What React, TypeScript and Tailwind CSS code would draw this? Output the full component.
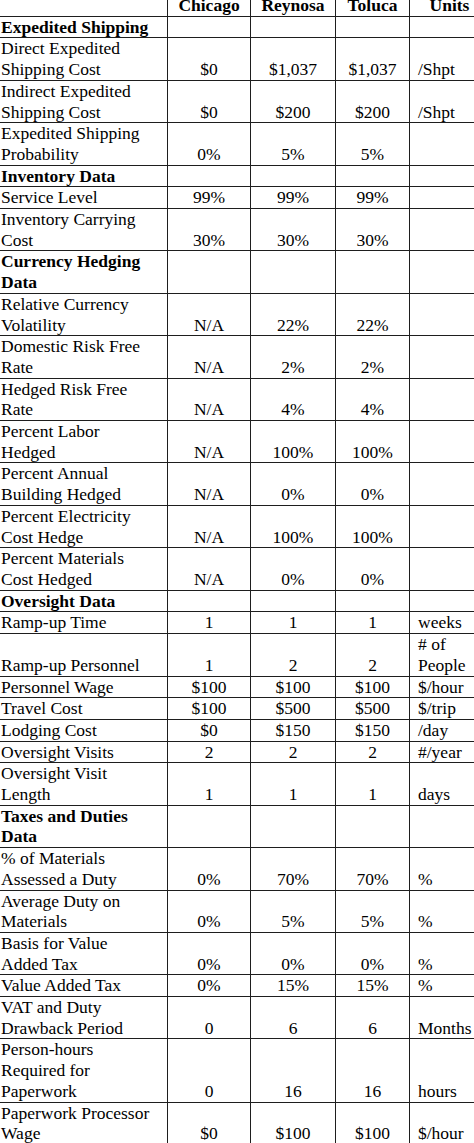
import React from "react";

type Row = {
  label: string[];
  vals?: string[];
  units?: string[];
  bold?: boolean;
};

const rows: Row[] = [
  { label: ["Expedited Shipping"], bold: true },
  { label: ["Direct Expedited", "Shipping Cost"], vals: ["$0", "$1,037", "$1,037"], units: ["/Shpt"] },
  { label: ["Indirect Expedited", "Shipping Cost"], vals: ["$0", "$200", "$200"], units: ["/Shpt"] },
  { label: ["Expedited Shipping", "Probability"], vals: ["0%", "5%", "5%"] },
  { label: ["Inventory Data"], bold: true },
  { label: ["Service Level"], vals: ["99%", "99%", "99%"] },
  { label: ["Inventory Carrying", "Cost"], vals: ["30%", "30%", "30%"] },
  { label: ["Currency Hedging", "Data"], bold: true },
  { label: ["Relative Currency", "Volatility"], vals: ["N/A", "22%", "22%"] },
  { label: ["Domestic Risk Free", "Rate"], vals: ["N/A", "2%", "2%"] },
  { label: ["Hedged Risk Free", "Rate"], vals: ["N/A", "4%", "4%"] },
  { label: ["Percent Labor", "Hedged"], vals: ["N/A", "100%", "100%"] },
  { label: ["Percent Annual", "Building Hedged"], vals: ["N/A", "0%", "0%"] },
  { label: ["Percent Electricity", "Cost Hedge"], vals: ["N/A", "100%", "100%"] },
  { label: ["Percent Materials", "Cost Hedged"], vals: ["N/A", "0%", "0%"] },
  { label: ["Oversight Data"], bold: true },
  { label: ["Ramp-up Time"], vals: ["1", "1", "1"], units: ["weeks"] },
  { label: ["Ramp-up Personnel"], vals: ["1", "2", "2"], units: ["# of", "People"] },
  { label: ["Personnel Wage"], vals: ["$100", "$100", "$100"], units: ["$/hour"] },
  { label: ["Travel Cost"], vals: ["$100", "$500", "$500"], units: ["$/trip"] },
  { label: ["Lodging Cost"], vals: ["$0", "$150", "$150"], units: ["/day"] },
  { label: ["Oversight Visits"], vals: ["2", "2", "2"], units: ["#/year"] },
  { label: ["Oversight Visit", "Length"], vals: ["1", "1", "1"], units: ["days"] },
  { label: ["Taxes and Duties", "Data"], bold: true },
  { label: ["% of Materials", "Assessed a Duty"], vals: ["0%", "70%", "70%"], units: ["%"] },
  { label: ["Average Duty on", "Materials"], vals: ["0%", "5%", "5%"], units: ["%"] },
  { label: ["Basis for Value", "Added Tax"], vals: ["0%", "0%", "0%"], units: ["%"] },
  { label: ["Value Added Tax"], vals: ["0%", "15%", "15%"], units: ["%"] },
  { label: ["VAT and Duty", "Drawback Period"], vals: ["0", "6", "6"], units: ["Months"] },
  { label: ["Person-hours", "Required for", "Paperwork"], vals: ["0", "16", "16"], units: ["hours"] },
  { label: ["Paperwork Processor", "Wage"], vals: ["$0", "$100", "$100"], units: ["$/hour"] },
];

const cell =
  "flex flex-col justify-end border-b border-r border-[#1e1e1e] whitespace-nowrap overflow-hidden";

function Lines({ lines }: { lines: string[] }) {
  return (
    <>
      {lines.map((l, i) => (
        <span key={i} className="block">
          {l}
        </span>
      ))}
    </>
  );
}

export default function App() {
  return (
    <div
      className="w-[474px] h-[1143px] overflow-hidden bg-white text-black text-[17.5px] leading-[20.7px]"
      style={{ fontFamily: '"Liberation Serif", "Times New Roman", serif' }}
    >
      <div className="-ml-[7px] -mt-[5px] grid grid-cols-[175px_83px_85px_74px_80px] w-[497px]">
        {/* header */}
        <div className={`${cell} pl-2 font-bold`}>&nbsp;</div>
        <div className={`${cell} text-center font-bold`}>Chicago</div>
        <div className={`${cell} text-center font-bold`}>Reynosa</div>
        <div className={`${cell} text-center font-bold`}>Toluca</div>
        <div className={`${cell} text-center font-bold`}>Units</div>

        {rows.map((r, i) => (
          <React.Fragment key={i}>
            <div className={`${cell} pl-2 ${r.bold ? "font-bold" : ""}`}>
              <Lines lines={r.label} />
            </div>
            {[0, 1, 2].map((j) => (
              <div key={j} className={`${cell} text-center`}>
                {r.vals ? r.vals[j] : ""}
              </div>
            ))}
            <div className={`${cell} pl-2`}>
              {r.units ? <Lines lines={r.units} /> : null}
            </div>
          </React.Fragment>
        ))}
      </div>
    </div>
  );
}
